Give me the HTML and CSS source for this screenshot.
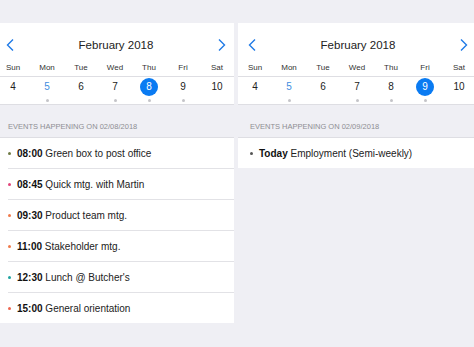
FILE: index.html
```html
<!DOCTYPE html>
<html lang="en">
<head>
  <meta charset="UTF-8" />
  <title>Calendar events</title>
  <link rel="stylesheet" href="styles.css">
</head>
<body>
  <div class="panel">
    <div class="cal">
      <div class="cal-head">
        <svg class="arrow" viewBox="0 0 8 12"><polyline points="7,0.5 1.5,6 7,11.5"/></svg>
        <div class="month">February 2018</div>
        <svg class="arrow" viewBox="0 0 8 12"><polyline points="1,0.5 6.5,6 1,11.5"/></svg>
      </div>
      <div class="days">
        <span>Sun</span><span>Mon</span><span>Tue</span><span>Wed</span><span>Thu</span><span>Fri</span><span>Sat</span>
      </div>
      <div class="dates">
        <div class="date"><span class="num">4</span><i class="mark"></i></div>
        <div class="date today"><span class="num">5</span><i class="mark on"></i></div>
        <div class="date"><span class="num">6</span><i class="mark"></i></div>
        <div class="date"><span class="num">7</span><i class="mark on"></i></div>
        <div class="date selected"><span class="num">8</span><i class="mark on"></i></div>
        <div class="date"><span class="num">9</span><i class="mark on"></i></div>
        <div class="date"><span class="num">10</span><i class="mark"></i></div>
      </div>
    </div>
    <div class="events-title">EVENTS HAPPENING ON 02/08/2018</div>
    <ul class="events">
      <li><i class="dot olive"></i><b>08:00</b>&nbsp;Green box to post office</li>
      <li><i class="dot pink"></i><b>08:45</b>&nbsp;Quick mtg. with Martin</li>
      <li><i class="dot orange"></i><b>09:30</b>&nbsp;Product team mtg.</li>
      <li><i class="dot orange"></i><b>11:00</b>&nbsp;Stakeholder mtg.</li>
      <li><i class="dot teal"></i><b>12:30</b>&nbsp;Lunch @ Butcher's</li>
      <li><i class="dot red"></i><b>15:00</b>&nbsp;General orientation</li>
    </ul>
  </div>

  <div class="panel">
    <div class="cal">
      <div class="cal-head">
        <svg class="arrow" viewBox="0 0 8 12"><polyline points="7,0.5 1.5,6 7,11.5"/></svg>
        <div class="month">February 2018</div>
        <svg class="arrow" viewBox="0 0 8 12"><polyline points="1,0.5 6.5,6 1,11.5"/></svg>
      </div>
      <div class="days">
        <span>Sun</span><span>Mon</span><span>Tue</span><span>Wed</span><span>Thu</span><span>Fri</span><span>Sat</span>
      </div>
      <div class="dates">
        <div class="date"><span class="num">4</span><i class="mark"></i></div>
        <div class="date today"><span class="num">5</span><i class="mark on"></i></div>
        <div class="date"><span class="num">6</span><i class="mark"></i></div>
        <div class="date"><span class="num">7</span><i class="mark on"></i></div>
        <div class="date"><span class="num">8</span><i class="mark on"></i></div>
        <div class="date selected"><span class="num">9</span><i class="mark on"></i></div>
        <div class="date"><span class="num">10</span><i class="mark"></i></div>
      </div>
    </div>
    <div class="events-title">EVENTS HAPPENING ON 02/09/2018</div>
    <ul class="events">
      <li><i class="dot gray"></i><b>Today</b>&nbsp;Employment (Semi-weekly)</li>
    </ul>
  </div>
</body>
</html>
```

FILE: styles.css
```css
* { margin: 0; padding: 0; box-sizing: border-box; }
body {
  font-family: "Liberation Sans", Arial, sans-serif;
  background-color: #efeff4;
  color: #222;
  display: flex;
  gap: 4px;
  margin-left: -4px;
  overflow: hidden;
  height: 347px;
}
.panel { width: 238px; flex: none; }
.cal {
  margin-top: 23px;
  background-color: #fff;
  border-bottom: 1px solid #dedee3;
}
.cal-head {
  height: 36px;
  padding: 7px 8px 0 10px;
  display: flex;
  align-items: center;
  justify-content: space-between;
}
.arrow {
  width: 8px;
  height: 12px;
  fill: none;
  stroke: #1f7ae6;
  stroke-width: 1.4;
}
.month { font-size: 11.5px; color: #222; }
.days {
  display: grid;
  grid-template-columns: repeat(7, 1fr);
  height: 18px;
  align-items: center;
  font-size: 8px;
  color: #333;
  text-align: center;
  border-bottom: 1px solid #dedee3;
}
.dates {
  display: grid;
  grid-template-columns: repeat(7, 1fr);
  padding: 1px 0 2px;
}
.date {
  display: flex;
  flex-direction: column;
  align-items: center;
}
.num {
  width: 18px;
  height: 18px;
  border-radius: 50%;
  font-size: 10px;
  line-height: 18px;
  text-align: center;
  color: #222;
}
.today .num { color: #3f8de0; }
.selected .num { background-color: #0a7bf2; color: #fff; }
.mark {
  width: 3px;
  height: 3px;
  margin-top: 3px;
  border-radius: 50%;
}
.mark.on { background-color: #c4c4c8; }
.events-title {
  padding: 17px 12px 6px;
  font-size: 7.5px;
  line-height: 9px;
  color: #8e8e93;
  border-bottom: 1px solid #dedee3;
}
.events { list-style: none; background-color: #fff; }
.events li {
  margin-left: 12px;
  height: 31px;
  display: flex;
  align-items: center;
  font-size: 10px;
  color: #222;
  border-bottom: 1px solid #e2e2e6;
}
.events li:last-child { border-bottom: none; height: 30px; }
.events b { color: #111; }
.dot {
  width: 3px;
  height: 3px;
  border-radius: 50%;
  margin-right: 6px;
}
.dot.olive { background-color: #6f7a45; }
.dot.pink { background-color: #e2457b; }
.dot.orange { background-color: #f07a4a; }
.dot.teal { background-color: #1fa3a0; }
.dot.red { background-color: #ee6650; }
.dot.gray { background-color: #555; }
```
